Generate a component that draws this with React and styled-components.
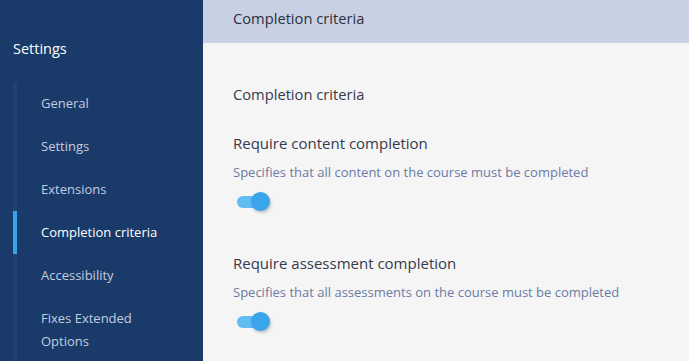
import React from 'react';
import styled, { createGlobalStyle } from 'styled-components';

const GlobalStyle = createGlobalStyle`
    html, body {
        margin: 0;
        padding: 0;
        height: 100%;
        overflow: hidden;
    }
    body {
        font-family: "Open Sans", "Noto Sans", sans-serif;
        background: #f5f5f5;
    }
    #root {
        height: 100%;
    }
`;

const Layout = styled.div`
    display: flex;
    height: 361px;
    overflow: hidden;
`;

const Sidebar = styled.aside`
    width: 203px;
    flex-shrink: 0;
    background: #1a3a69;
    padding-top: 36px;
    box-sizing: border-box;
`;

const SideTitle = styled.div`
    color: #ffffff;
    font-size: 14.5px;
    line-height: 26px;
    padding-left: 13px;
    margin-bottom: 20px;
`;

const NavList = styled.ul`
    list-style: none;
    margin: 0 0 0 13px;
    padding: 0;
    border-left: 4px solid #20446f;
`;

const NavItem = styled.li`
    position: relative;
    min-height: 43px;
    display: flex;
    align-items: center;
    padding: 10px 0 10px 24px;
    box-sizing: border-box;
    font-size: 13px;
    line-height: 23px;
    color: ${p => (p.$active ? '#ffffff' : '#c3cde0')};
    &::before {
        content: '';
        display: ${p => (p.$active ? 'block' : 'none')};
        position: absolute;
        left: -4px;
        top: 0;
        bottom: 0;
        width: 4px;
        background: #3aa3ea;
    }
`;

const Main = styled.main`
    flex: 1;
    display: flex;
    flex-direction: column;
    background: #f5f5f5;
    overflow: hidden;
`;

const Header = styled.header`
    height: 43px;
    flex-shrink: 0;
    background: #c8d0e3;
    display: flex;
    align-items: center;
    padding: 0 30px 8px;
    font-size: 14.7px;
    color: #2b3040;
    box-sizing: border-box;
`;

const Content = styled.div`
    flex-shrink: 0;
    padding: 38px 30px 0;
`;

const SectionTitle = styled.h2`
    margin: 0 0 24px;
    font-weight: 400;
    font-size: 14.7px;
    line-height: 26px;
    color: #363a4c;
`;

const Option = styled.div`
    margin-bottom: 38px;
`;

const OptionTitle = styled.h3`
    margin: 0;
    font-weight: 400;
    font-size: 15px;
    line-height: 24px;
    color: #363a4c;
`;

const OptionText = styled.p`
    margin: 7px 0 9px;
    font-size: 13px;
    line-height: 20px;
    color: #6b7ba3;
`;

const Toggle = styled.div`
    position: relative;
    width: 37px;
    height: 22px;
    margin-left: 4px;
    display: flex;
    align-items: center;
`;

const Track = styled.div`
    width: 24px;
    height: 12px;
    border-radius: 6px;
    background: #5fbdf2;
`;

const Thumb = styled.div`
    position: absolute;
    left: 14px;
    top: 1px;
    width: 19px;
    height: 19px;
    border-radius: 50%;
    background: #3ba5ea;
    box-shadow: 1px 2px 3px rgba(0, 0, 0, 0.22);
`;

const navItems = [
    'General',
    'Settings',
    'Extensions',
    'Completion criteria',
    'Accessibility',
    'Fixes Extended Options',
];

const options = [
    {
        title: 'Require content completion',
        text: 'Specifies that all content on the course must be completed',
    },
    {
        title: 'Require assessment completion',
        text: 'Specifies that all assessments on the course must be completed',
    },
];

export default function App() {
    return (
        <>
            <GlobalStyle />
            <Layout>
                <Sidebar>
                    <SideTitle>Settings</SideTitle>
                    <NavList>
                        {navItems.map(item => (
                            <NavItem key={item} $active={item === 'Completion criteria'}>
                                {item === 'Fixes Extended Options' ? (
                                    <span>Fixes Extended<br />Options</span>
                                ) : item}
                            </NavItem>
                        ))}
                    </NavList>
                </Sidebar>
                <Main>
                    <Header>Completion criteria</Header>
                    <Content>
                        <SectionTitle>Completion criteria</SectionTitle>
                        {options.map(o => (
                            <Option key={o.title}>
                                <OptionTitle>{o.title}</OptionTitle>
                                <OptionText>{o.text}</OptionText>
                                <Toggle>
                                    <Track />
                                    <Thumb />
                                </Toggle>
                            </Option>
                        ))}
                    </Content>
                </Main>
            </Layout>
        </>
    );
}
